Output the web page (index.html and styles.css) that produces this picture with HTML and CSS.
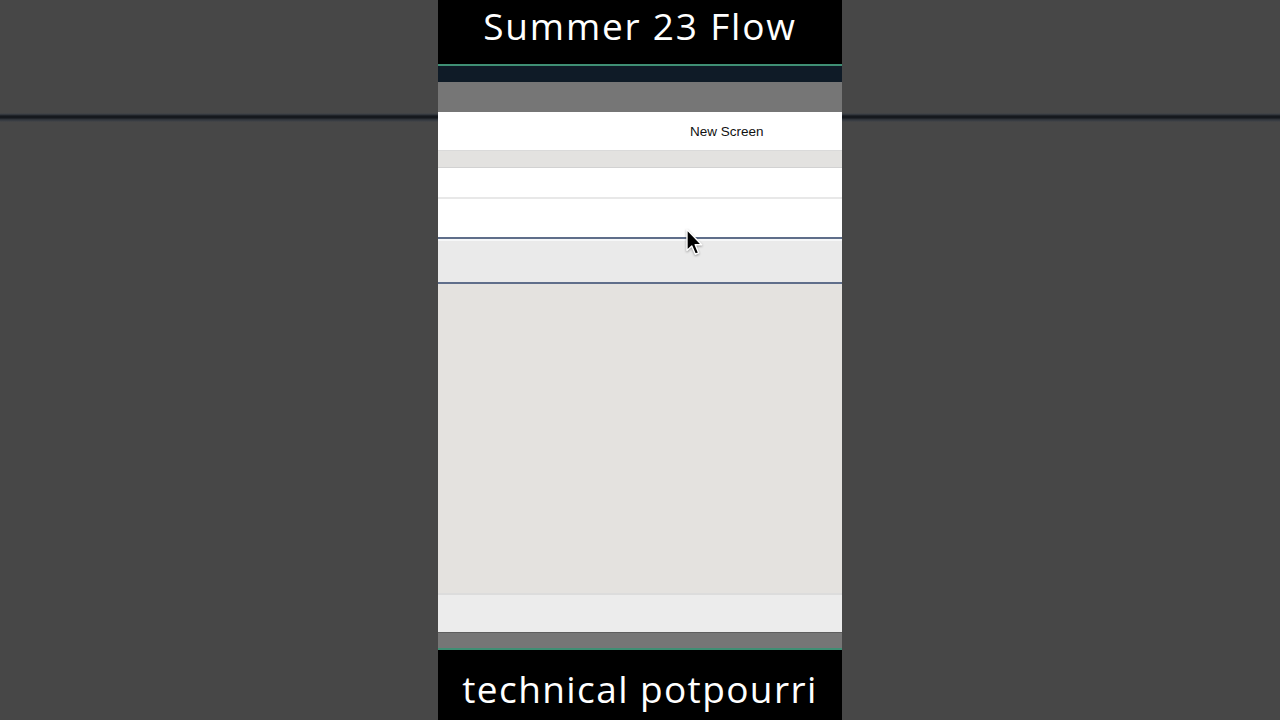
FILE: index.html
```html
<!DOCTYPE html>
<html>
<head>
<meta charset="utf-8">
<link rel="stylesheet" href="styles.css">
</head>
<body>
<div class="stage">
  <main class="phone">
    <header class="title-bar"><h1 class="title">Summer 23 Flow</h1></header>
    <div class="teal-line"></div>
    <div class="navy-band"></div>
    <div class="gray-band"></div>
    <div class="screen-head"><span class="screen-name">New Screen</span></div>
    <div class="section-band"></div>
    <div class="row row-a"></div>
    <div class="row row-b"></div>
    <div class="selected-row"></div>
    <div class="canvas"></div>
    <div class="footer-bar"></div>
    <div class="gray-band gray-bottom"></div>
    <div class="teal-line"></div>
    <footer class="caption-bar"><p class="caption">technical potpourri</p></footer>
    <svg class="cursor" width="20" height="30" viewBox="0 0 18 28">
      <path d="M1.5 1.5 L1.5 21 L6 16.8 L9.3 24.5 L12.4 23.2 L9.2 15.6 L15.2 15.6 Z" fill="#000" stroke="#fff" stroke-width="1.3" stroke-linejoin="round"/>
    </svg>
  </main>
</div>
</body>
</html>
```
FILE: styles.css
```css
html, body {
  margin: 0;
  height: 100%;
}
body {
  background-color: #474747;
  background-image: linear-gradient(to bottom,
    transparent 113px, #3c4046 114px, #2a2e34 115px, #16191e 116px, #16191e 118px, #2c3036 119px, #3c4046 121px, transparent 122px);
  font-family: "Liberation Sans", Arial, sans-serif;
}
.stage {
  display: flex;
  justify-content: center;
  height: 720px;
}
.phone {
  position: relative;
  width: 404px;
  display: flex;
  flex-direction: column;
}
.title-bar {
  height: 64px;
  background: #000;
  display: flex;
  justify-content: center;
  align-items: flex-start;
}
.title {
  margin: 0;
  padding-top: 2px;
  font-family: "Open Sans", sans-serif;
  font-weight: 400;
  font-size: 37px;
  line-height: 48px;
  letter-spacing: 1.8px;
  color: #fff;
}
.teal-line {
  height: 2px;
  background: #3f8f74;
}
.navy-band {
  height: 16px;
  background: #0f1b27;
}
.gray-band {
  height: 30px;
  background: #767676;
}
.screen-head {
  height: 38px;
  background: #fff;
  display: flex;
  align-items: center;
  padding-left: 252px;
}
.screen-name {
  font-size: 13.5px;
  color: #111;
}
.section-band {
  height: 16px;
  background: #e3e2e0;
  border-top: 1px solid #dadada;
  border-bottom: 1px solid #d2d2d2;
}
.row {
  background: #fff;
}
.row-a {
  height: 29px;
  border-bottom: 2px solid #e8e8e8;
}
.row-b {
  height: 38px;
  border-bottom: 2px solid #5f6e8a;
}
.selected-row {
  height: 41px;
  background: #eaeaea;
  border-top: 2px solid #f6f7f8;
  border-bottom: 2px solid #5f6e8a;
}
.canvas {
  flex: 0 0 309px;
  background: #e4e2df;
  border-bottom: 2px solid #dcdcdc;
}
.footer-bar {
  height: 37px;
  background: #ececec;
  border-bottom: 1px solid #5e5e5e;
}
.gray-bottom {
  height: 15px;
}
.caption-bar {
  flex: 1;
  background: #000;
  display: flex;
  justify-content: center;
}
.caption {
  margin: 0;
  padding-top: 15px;
  font-family: "Open Sans", sans-serif;
  font-weight: 400;
  font-size: 37px;
  line-height: 48px;
  letter-spacing: 1.4px;
  color: #fff;
}
.cursor {
  position: absolute;
  left: 247px;
  top: 228px;
  filter: drop-shadow(0 1px 1px rgba(0,0,0,0.35));
}
```
